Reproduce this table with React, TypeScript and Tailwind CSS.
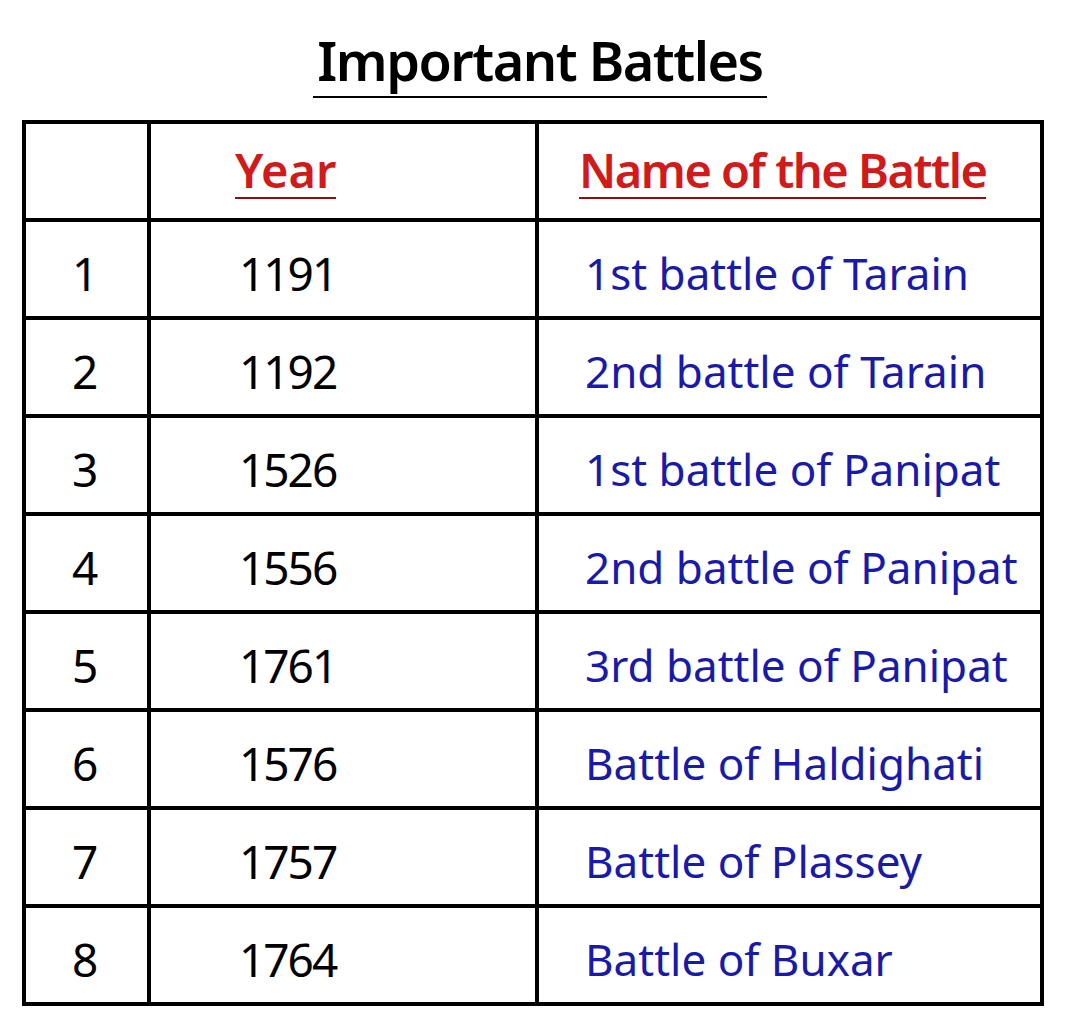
const battles = [
  { n: 1, year: '1191', name: '1st battle of Tarain' },
  { n: 2, year: '1192', name: '2nd battle of Tarain' },
  { n: 3, year: '1526', name: '1st battle of Panipat' },
  { n: 4, year: '1556', name: '2nd battle of Panipat' },
  { n: 5, year: '1761', name: '3rd battle of Panipat' },
  { n: 6, year: '1576', name: 'Battle of Haldighati' },
  { n: 7, year: '1757', name: 'Battle of Plassey' },
  { n: 8, year: '1764', name: 'Battle of Buxar' },
];

export default function App() {
  return (
    <div className="w-[1080px] h-[1025px] bg-white font-['Comic_Sans_MS','Noto_Sans',sans-serif] overflow-hidden">
      {/* Title */}
      <div className="flex justify-center pt-[28px]">
        <h1 className="text-[54px] leading-[64px] font-semibold text-black border-b-2 border-black px-1 pb-1 tracking-[-1.5px]">
          Important Battles
        </h1>
      </div>

      <table className="ml-[22px] mt-[22px] border-collapse border-4 border-black table-fixed w-[1018px]">
        <colgroup>
          <col className="w-[125px]" />
          <col className="w-[388px]" />
          <col className="w-[505px]" />
        </colgroup>
        <thead>
          <tr className="h-[98px]">
            <th className="border-4 border-black"></th>
            <th className="border-4 border-black font-normal text-left pl-[84px]">
              <span className="text-[47px] font-semibold text-[#d11a1a] border-b-2 border-[#8a1010] leading-[54px] inline-block">
                Year
              </span>
            </th>
            <th className="border-4 border-black font-normal text-left pl-[40px]">
              <span className="text-[47px] font-semibold text-[#d11a1a] border-b-2 border-[#8a1010] leading-[54px] inline-block tracking-[-1.5px]">
                Name of the Battle
              </span>
            </th>
          </tr>
        </thead>
        <tbody>
          {battles.map((b) => (
            <tr key={b.n} className="h-[98px]">
              <td className="border-4 border-black text-[46px] text-black pl-[46px] pt-2">{b.n}</td>
              <td className="border-4 border-black text-[46px] text-black pl-[88px] pt-2 tracking-[-2px]">{b.year}</td>
              <td className="border-4 border-black text-[44px] text-[#1a1aa8] pl-[46px] pt-2">{b.name}</td>
            </tr>
          ))}
        </tbody>
      </table>
    </div>
  );
}
